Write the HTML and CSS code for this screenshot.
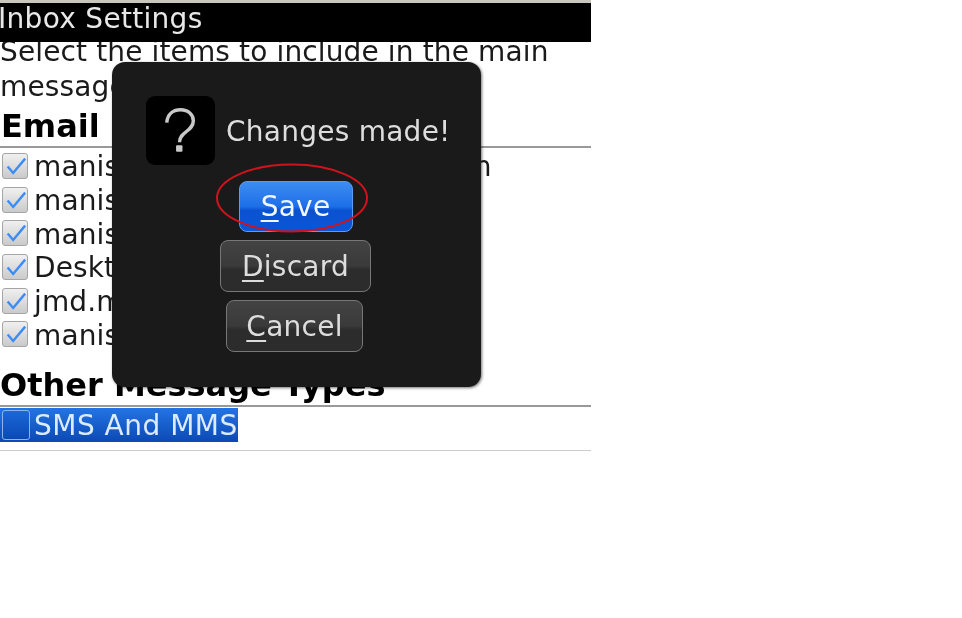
FILE: index.html
```html
<!DOCTYPE html>
<html lang="en">
<head>
<meta charset="utf-8">
<title>Inbox Settings</title>
<link rel="stylesheet" href="styles.css">
</head>
<body>
<main class="screen">
  <div class="topline"></div>
  <header class="titlebar">Inbox Settings</header>
  <p class="intro">Select the items to include in the main message list.</p>
  <h2 class="section first">Email</h2>
  <ul class="list">
    <li class="row"><span class="check"><svg viewBox="0 0 26 26"><path d="M5 13.500l6 7L24 5"/></svg></span><span>manish.jmd@hotmail-email.com</span></li>
    <li class="row"><span class="check"><svg viewBox="0 0 26 26"><path d="M5 13.500l6 7L24 5"/></svg></span><span>manish</span></li>
    <li class="row"><span class="check"><svg viewBox="0 0 26 26"><path d="M5 13.500l6 7L24 5"/></svg></span><span>manish</span></li>
    <li class="row"><span class="check"><svg viewBox="0 0 26 26"><path d="M5 13.500l6 7L24 5"/></svg></span><span>Desktop</span></li>
    <li class="row"><span class="check"><svg viewBox="0 0 26 26"><path d="M5 13.500l6 7L24 5"/></svg></span><span>jmd.manish</span></li>
    <li class="row"><span class="check"><svg viewBox="0 0 26 26"><path d="M5 13.500l6 7L24 5"/></svg></span><span>manish</span></li>
  </ul>
  <h2 class="section second">Other Message Types</h2>
  <div class="selected-row"><div class="selected"><span class="check-sel"></span><span>SMS And MMS</span></div></div>

  <section class="dialog">
    <div class="message">
      <div class="qicon"><svg viewBox="0 0 70 70"><path d="M21 27c1-9 7-13 14-13 8 0 13 5 13 11 0 11-14 11-14 22"/><rect x="30.500" y="50" width="6.500" height="6.500" rx="1"/></svg></div>
      <span class="msg-text">Changes made!</span>
    </div>
    <div class="buttons">
      <button class="btn primary"><u>S</u>ave</button>
      <button class="btn wide"><u>D</u>iscard</button>
      <button class="btn mid"><u>C</u>ancel</button>
    </div>
  </section>
  <svg class="ring" viewBox="0 0 154 72"><ellipse cx="77" cy="36" rx="75" ry="33.5"/></svg>
</main>
</body>
</html>
```
FILE: styles.css
```css
* { box-sizing: border-box; }
html, body { margin: 0; padding: 0; background: #fff; }
body { font-family: "DejaVu Sans", sans-serif; color: #111; }
.screen { position: relative; width: 591px; height: 452px; overflow: hidden; background: #fff; filter: blur(0.6px); }
.topline { height: 3px; background: #c9c6bd; }
.titlebar { position: relative; z-index: 1; height: 39px; background: #000; color: #e8e8e8; font-size: 28px; line-height: 32px; white-space: nowrap; text-indent: -2px; letter-spacing: 0.3px; }
.intro { margin: -8px 0 0; font-size: 28px; line-height: 35px; height: 72px; letter-spacing: 0.13px; color: #1a1a1a; }
.section { margin: 0; font-size: 32px; line-height: 36px; font-weight: 700; color: #000; border-bottom: 2px solid #999; }
.section.first { height: 42px; padding: 2px 0 0 1px; }
.section.second { height: 41px; margin-top: 14px; padding-top: 1px; }
.list { list-style: none; margin: 0; padding: 2px 0 0; }
.row { display: flex; align-items: center; gap: 6px; height: 33.7px; padding-left: 2px; font-size: 28px; letter-spacing: 0.13px; white-space: nowrap; color: #1a1a1a; }
.check { width: 26px; height: 26px; flex: none; margin-bottom: 2px; border: 1px solid #a5a5a5; border-radius: 3px; background: linear-gradient(#f0f0f0, #cacaca); }
.check svg { display: block; width: 24px; height: 24px; }
.check path { fill: none; stroke: #3b8df5; stroke-width: 2.6; }
.selected-row { height: 44px; border-bottom: 1px solid #ccc; padding-top: 1px; }
.selected { display: flex; align-items: center; height: 34px; width: 238px; background: linear-gradient(#2474e4, #0b49b4); color: #dcebff; font-size: 28px; letter-spacing: 0.5px; white-space: nowrap; }
.check-sel { width: 28px; height: 30px; margin: 0 4px 0 2px; flex: none; border: 1px solid #8db4ee; border-radius: 3px; background: linear-gradient(#1b68d8, #0b49b4); }
.dialog { position: absolute; left: 112px; top: 62px; width: 369px; height: 325px; background: #1a1a1a; border-radius: 13px; box-shadow: 1px 1px 3px rgba(0,0,0,.55); display: flex; flex-direction: column; align-items: center; }
.message { align-self: flex-start; display: flex; align-items: center; gap: 11px; margin: 34px 0 0 34px; }
.qicon { width: 69px; height: 69px; background: #000; border-radius: 9px; }
.qicon svg { display: block; width: 69px; height: 69px; }
.qicon path { fill: none; stroke: #c8c8c8; stroke-width: 3.5; }
.qicon rect { fill: #c8c8c8; }
.msg-text { color: #ddd; font-size: 28px; letter-spacing: 0.25px; white-space: nowrap; margin-top: 1px; }
.buttons { display: flex; flex-direction: column; align-items: center; gap: 8px; margin-top: 16px; margin-left: -2px; }
.btn { display: block; height: 52px; padding: 0; border: 1px solid #777; border-radius: 8px; background: linear-gradient(#434343 0%, #3a3a3a 50%, #2c2c2c 58%, #2c2c2c 100%); color: #ddd; font: 28px "DejaVu Sans", sans-serif; letter-spacing: 0.25px; }
.btn u { text-decoration-thickness: 2px; text-underline-offset: 4px; }
.primary { width: 114px; height: 51px; border-color: #5d9bf2; background: linear-gradient(#3d8cf2 0%, #1d6fe8 50%, #0a52d0 58%, #0a55d8 100%); color: #f2f7ff; }
.wide { width: 151px; }
.mid { width: 137px; margin-right: 2px; }
.ring { position: absolute; left: 215px; top: 162px; width: 154px; height: 72px; }
.ring ellipse { fill: none; stroke: #d0121c; stroke-width: 2; }
```
